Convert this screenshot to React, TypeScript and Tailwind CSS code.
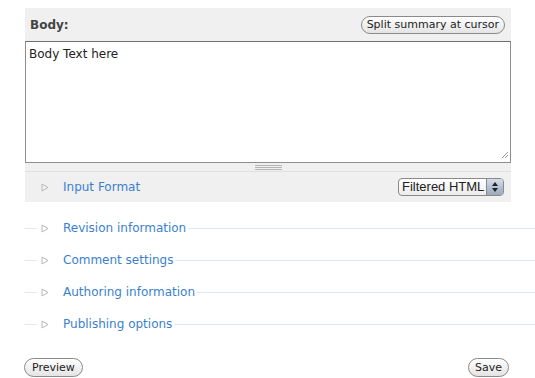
import React from 'react'

const pill =
  'rounded-full border border-[#8a8a8a] bg-gradient-to-b from-white to-[#e4e4e4] text-[11px] leading-[16px] text-[#222] shadow-[inset_0_1px_0_#fff]'

function Triangle() {
  return (
    <svg width="8" height="9" viewBox="0 0 8 9" className="shrink-0">
      <path d="M1 1 L7 4.5 L1 8 Z" fill="none" stroke="#b8b8b8" strokeWidth="1" />
    </svg>
  )
}

function Fieldset({ label }: { label: string }) {
  return (
    <div className="flex h-[32px] items-center pl-[25px]">
      <div className="h-px w-[12px] bg-[#dce8f3]" />
      <div className="ml-[4px] mr-[14px]">
        <Triangle />
      </div>
      <span className="text-[12px] text-[#3b7fcf]">{label}</span>
      <div className="ml-[2px] h-px flex-1 bg-[#dce8f3]" />
    </div>
  )
}

export default function App() {
  return (
    <div
      className="h-[378px] w-[535px] overflow-hidden bg-white"
      style={{ fontFamily: '"DejaVu Sans", Verdana, sans-serif' }}
    >
      <div className="ml-[25px] mt-[8px] w-[486px] bg-[#f0f0f0]">
        <div className="flex h-[33px] items-center justify-between pl-[5px] pr-[6px]">
          <span className="text-[12px] font-bold text-[#444]">Body:</span>
          <button className={pill + ' h-[18px] px-[5px]'}>Split summary at cursor</button>
        </div>
        <div className="h-[122px] border border-[#8e8e8e] border-t-[#6f6f6f] bg-white px-[3px] py-[3px] text-[12px] text-[#222]">
          Body Text here
          <div className="relative h-full">
            <svg width="8" height="8" className="absolute bottom-[18px] right-[-2px]">
              <path d="M1 7 L7 1 M4 7 L7 4" stroke="#999" strokeWidth="1" />
            </svg>
          </div>
        </div>
        <div className="flex h-[9px] flex-col items-center justify-center gap-[1px] border-b border-[#e0e0e0]">
          <div className="h-px w-[27px] bg-[#b5b5b5]" />
          <div className="h-px w-[27px] bg-[#b5b5b5]" />
          <div className="h-px w-[27px] bg-[#b5b5b5]" />
        </div>
        <div className="flex h-[30px] items-center pl-[16px] pr-[7px]">
          <Triangle />
          <span className="ml-[14px] text-[12px] text-[#3b7fcf]">Input Format</span>
          <div className="ml-auto flex h-[18px] w-[106px] items-center overflow-hidden rounded-[4px] border border-[#8a8a8a] bg-gradient-to-b from-white to-[#ececec]">
            <span
              className="flex-1 pl-[3px] text-[13px] leading-[16px] text-[#222]"
              style={{ fontFamily: '"Liberation Sans", Arial, sans-serif' }}
            >
              Filtered HTML
            </span>
            <div className="flex h-full w-[17px] flex-col items-center justify-center border-l border-[#8a8a8a] bg-gradient-to-b from-[#d6dde8] to-[#9aa8bd]">
              <svg width="6" height="10" viewBox="0 0 6 10">
                <path d="M3 0 L6 4 L0 4 Z M3 10 L6 6 L0 6 Z" fill="#222" />
              </svg>
            </div>
          </div>
        </div>
      </div>
      <div className="mt-[10px]">
        <Fieldset label="Revision information" />
        <Fieldset label="Comment settings" />
        <Fieldset label="Authoring information" />
        <Fieldset label="Publishing options" />
      </div>
      <div className="mt-[18px] flex justify-between pl-[24px] pr-[26px]">
        <button className={pill + ' h-[19px] px-[7px]'}>Preview</button>
        <button className={pill + ' h-[19px] px-[6px]'}>Save</button>
      </div>
    </div>
  )
}
